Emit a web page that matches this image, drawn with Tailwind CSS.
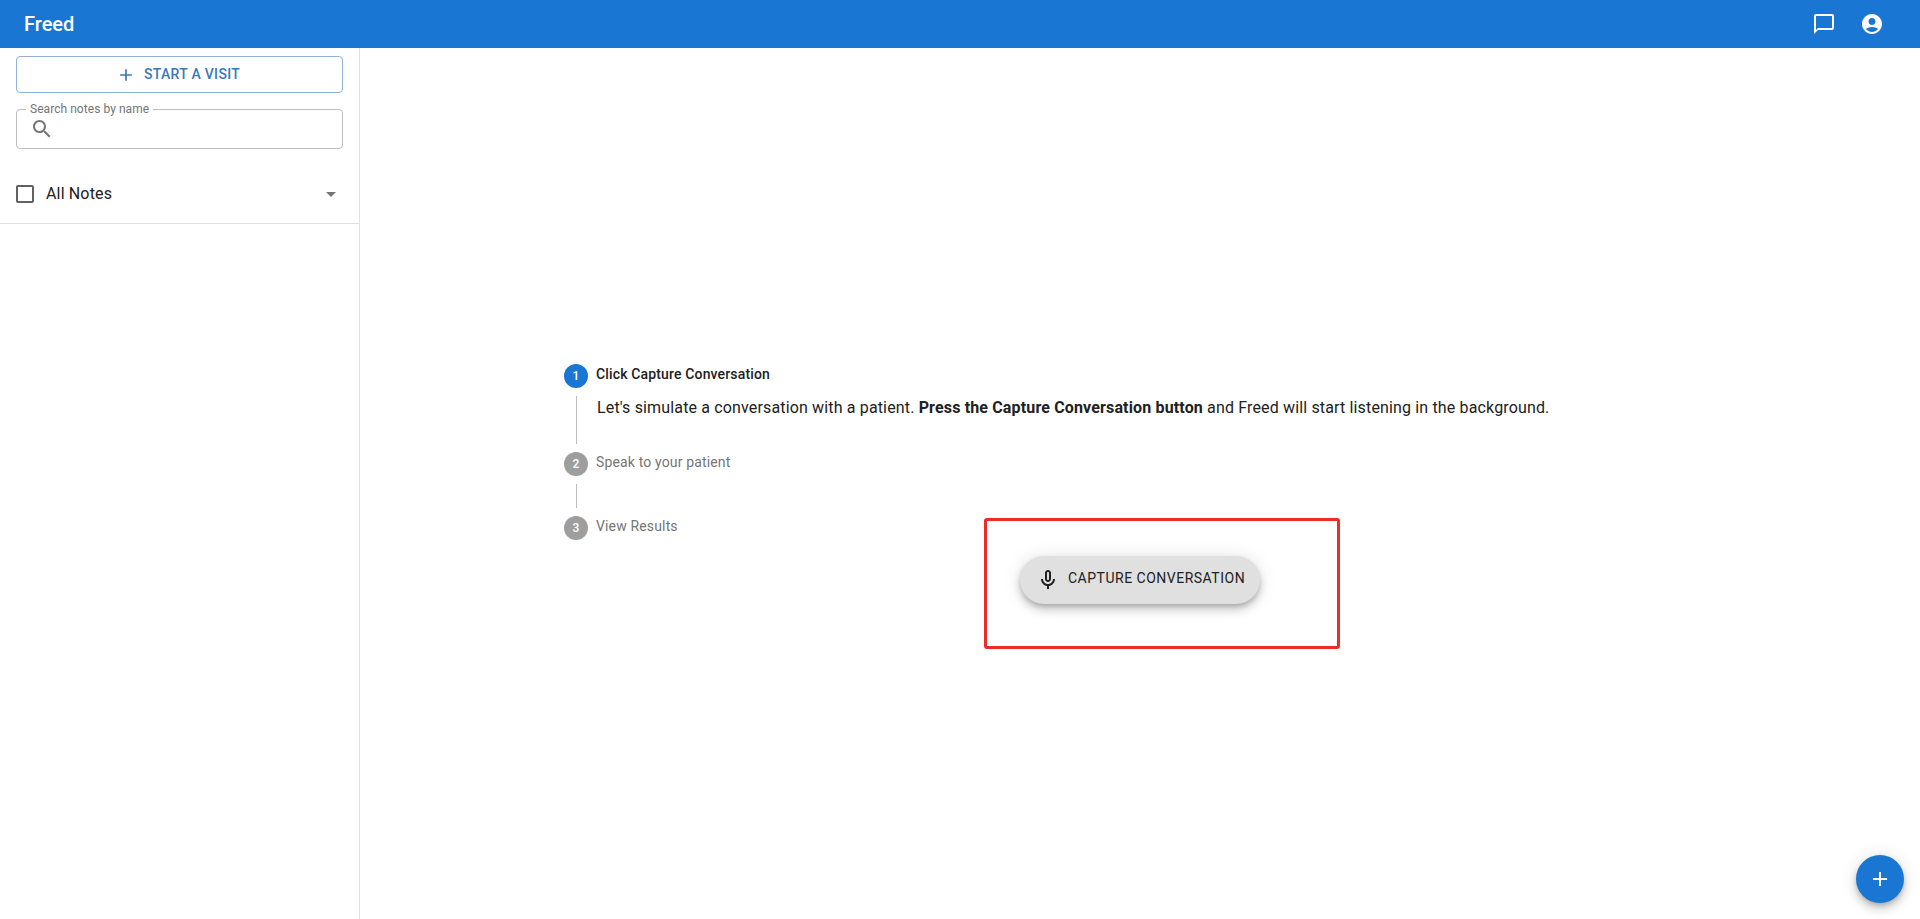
<!DOCTYPE html>
<html lang="en">
<head>
  <meta charset="UTF-8" />
  <title>Freed</title>
  <script src="https://cdn.jsdelivr.net/npm/@tailwindcss/browser@4"></script>
</head>
<body class="h-[919px] overflow-hidden bg-white text-[#212121] font-['Roboto',sans-serif]">
  <!-- Top bar -->
  <header class="h-12 bg-[#1976d2] flex items-center pl-6 pr-[36px] text-white">
    <h1 class="text-xl font-medium flex-1">Freed</h1>
    <div class="flex items-center gap-6">
      <svg class="w-6 h-6 fill-white" viewBox="0 0 24 24"><path d="M20 2H4c-1.1 0-2 .9-2 2v18l4-4h14c1.1 0 2-.9 2-2V4c0-1.1-.9-2-2-2zm0 14H6l-2 2V4h16v12z"/></svg>
      <svg class="w-6 h-6 fill-white" viewBox="0 0 24 24"><path d="M12 2C6.48 2 2 6.48 2 12s4.48 10 10 10 10-4.48 10-10S17.52 2 12 2zm0 4c1.93 0 3.5 1.57 3.5 3.5S13.93 13 12 13s-3.5-1.57-3.5-3.5S10.07 6 12 6zm0 14c-2.03 0-4.43-.82-6.14-2.88C7.55 15.8 9.68 15 12 15s4.45.8 6.14 2.12C16.43 19.18 14.03 20 12 20z"/></svg>
    </div>
  </header>

  <div class="flex h-[871px]">
    <!-- Sidebar -->
    <aside class="w-[360px] shrink-0 border-r border-[#e0e0e0]">
      <div class="px-4 pt-2">
        <button class="w-full h-[37px] pb-[2px] pr-[3px] border border-[#8fb2d6] rounded flex items-center justify-center gap-2 text-sm font-medium tracking-[0.3px] text-[#3b78b8]">
          <svg class="w-5 h-5 fill-[#3b78b8] mt-[2px]" viewBox="0 0 24 24"><path d="M19 13h-6v6h-2v-6H5v-2h6V5h2v6h6v2z"/></svg>
          START A VISIT
        </button>
        <div class="relative mt-4 h-10 border border-[#bdbdbd] rounded flex items-center pl-[13px]">
          <span class="absolute left-[9px] -top-[8px] bg-white px-1 text-xs leading-[14px] tracking-[0.05px] text-[#757575]">Search notes by name</span>
          <svg class="w-6 h-6 fill-[#757575]" viewBox="0 0 24 24"><path d="M15.5 14h-.79l-.28-.27C15.41 12.59 16 11.11 16 9.5 16 5.91 13.09 3 9.5 3S3 5.91 3 9.5 5.91 16 9.5 16c1.61 0 3.09-.59 4.23-1.57l.27.28v.79l5 4.99L20.49 19l-4.99-5zm-6 0C7.01 14 5 11.99 5 9.5S7.01 5 9.5 5 14 7.01 14 9.5 11.99 14 9.5 14z"/></svg>
        </div>
      </div>
      <div class="h-[75px] pt-4 border-b border-[#e0e0e0] flex items-center pl-[13px] pr-[16px]">
        <svg class="w-6 h-6 fill-[#616161]" viewBox="0 0 24 24"><path d="M19 5v14H5V5h14m0-2H5c-1.1 0-2 .9-2 2v14c0 1.1.9 2 2 2h14c1.1 0 2-.9 2-2V5c0-1.1-.9-2-2-2z"/></svg>
        <span class="ml-[9px] flex-1 text-base tracking-[0.15px] text-[#212121]">All Notes</span>
        <svg class="w-6 h-6 fill-[#757575]" viewBox="0 0 24 24"><path d="M7 10l5 5 5-5z"/></svg>
      </div>
    </aside>

    <!-- Stepper -->
    <main class="flex-1 pl-[204px] pt-[316px]">
      <div class="flex items-center gap-2 h-6">
        <span class="w-6 h-6 rounded-full bg-[#1976d2] text-white text-xs font-medium flex items-center justify-center">1</span>
        <span class="text-sm font-medium tracking-[0.15px] text-[#212121] -mt-[4px]">Click Capture Conversation</span>
      </div>
      <div class="ml-3 mt-2 h-12 border-l border-[#bdbdbd] pl-5">
        <p class="text-base leading-6 tracking-[0.15px] text-[#212121] whitespace-nowrap">Let's simulate a conversation with a patient. <strong class="font-bold">Press the Capture Conversation button</strong> and Freed will start listening in the background.</p>
      </div>
      <div class="flex items-center gap-2 h-6 mt-2">
        <span class="w-6 h-6 rounded-full bg-[#9e9e9e] text-white text-xs font-medium flex items-center justify-center">2</span>
        <span class="text-sm tracking-[0.15px] text-[#757575] -mt-[4px]">Speak to your patient</span>
      </div>
      <div class="ml-3 my-2 h-6 border-l border-[#bdbdbd]"></div>
      <div class="flex items-center gap-2 h-6">
        <span class="w-6 h-6 rounded-full bg-[#9e9e9e] text-white text-xs font-medium flex items-center justify-center">3</span>
        <span class="text-sm tracking-[0.15px] text-[#757575] -mt-[4px]">View Results</span>
      </div>
    </main>
  </div>

  <!-- Highlight box drawn over the page -->
  <div class="absolute left-[984px] top-[518px] w-[356px] h-[131px] border-[3px] border-[#ea2e26] rounded-[3px]"></div>
  <button class="absolute left-[1020px] top-[556px] w-[240px] h-12 rounded-3xl bg-[#e0e0e0] flex items-center pl-[16px] text-sm tracking-[0.5px] text-[#212121] shadow-[0_3px_5px_-1px_rgba(0,0,0,0.2),0_6px_10px_0_rgba(0,0,0,0.14),0_1px_18px_0_rgba(0,0,0,0.12)]">
    <svg class="w-6 h-6 fill-[#212121] mr-2" viewBox="0 0 24 24"><path d="M12 14c1.66 0 3-1.34 3-3V5c0-1.66-1.34-3-3-3S9 3.34 9 5v6c0 1.66 1.34 3 3 3zm-1-9c0-.55.45-1 1-1s1 .45 1 1v6c0 .55-.45 1-1 1s-1-.45-1-1V5zm6 6c0 2.76-2.24 5-5 5s-5-2.24-5-5H5c0 3.53 2.61 6.43 6 6.92V21h2v-3.08c3.39-.49 6-3.39 6-6.92h-2z"/></svg>
    <span class="-mt-[4px]">CAPTURE CONVERSATION</span>
  </button>

  <!-- Floating action button -->
  <button class="absolute left-[1856px] top-[855px] w-12 h-12 rounded-full bg-[#1976d2] flex items-center justify-center shadow-[0_3px_5px_-1px_rgba(0,0,0,0.2),0_6px_10px_0_rgba(0,0,0,0.14),0_1px_18px_0_rgba(0,0,0,0.12)]">
    <svg class="w-6 h-6 fill-white" viewBox="0 0 24 24"><path d="M19 13h-6v6h-2v-6H5v-2h6V5h2v6h6v2z"/></svg>
  </button>
</body>
</html>
